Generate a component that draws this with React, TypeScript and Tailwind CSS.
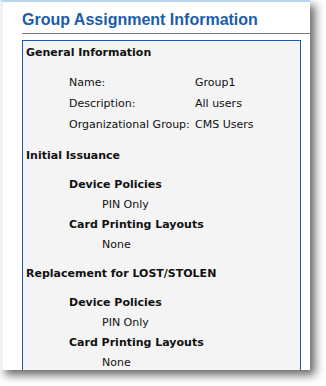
export default function App() {
  const general = [
    { label: "Name:", value: "Group1" },
    { label: "Description:", value: "All users" },
    { label: "Organizational Group:", value: "CMS Users" },
  ];

  const sections = [
    { title: "Initial Issuance", gap: "mt-[10px]" },
    { title: "Replacement for LOST/STOLEN", gap: "mt-[9px]" },
  ];

  return (
    <div className="w-[326px] h-[386px] bg-white">
      <div className="w-[310px] h-[370px] overflow-hidden bg-white border-t-2 border-t-[#bcd5ef] border-l-[3px] border-l-[#f1f1f1] shadow-[5px_5px_9px_rgba(0,0,0,0.6)]">
        <div className="pl-[19px] pt-[7px]">
          <div className="h-[25px] border-b border-b-[#7a7a7a] text-[16px] leading-[22px] font-bold text-[#1b5da8] font-['Liberation_Sans',Arial,sans-serif]">
            Group Assignment Information
          </div>
          <div className="mt-[6px] mr-[9px] border border-[#1c5aa6] bg-[#f4f4f4] pl-[3px] pt-[2px] text-[11px] leading-5 text-[#111] font-['DejaVu_Sans',Verdana,sans-serif]">
            <div className="h-5 font-bold">General Information</div>
            <div className="mt-[10px] pl-[43px]">
              {general.map((row) => (
                <div key={row.label} className="flex h-[21px]">
                  <div className="w-[126px]">{row.label}</div>
                  <div>{row.value}</div>
                </div>
              ))}
            </div>
            {sections.map((s) => (
              <div key={s.title} className={s.gap}>
                <div className="h-5 font-bold">{s.title}</div>
                <div className="mt-[9px] pl-[43px]">
                  <div className="h-5 font-bold">Device Policies</div>
                  <div className="h-5 pl-[33px]">PIN Only</div>
                  <div className="h-5 font-bold">Card Printing Layouts</div>
                  <div className="h-5 pl-[33px]">None</div>
                </div>
              </div>
            ))}
          </div>
        </div>
      </div>
    </div>
  );
}
